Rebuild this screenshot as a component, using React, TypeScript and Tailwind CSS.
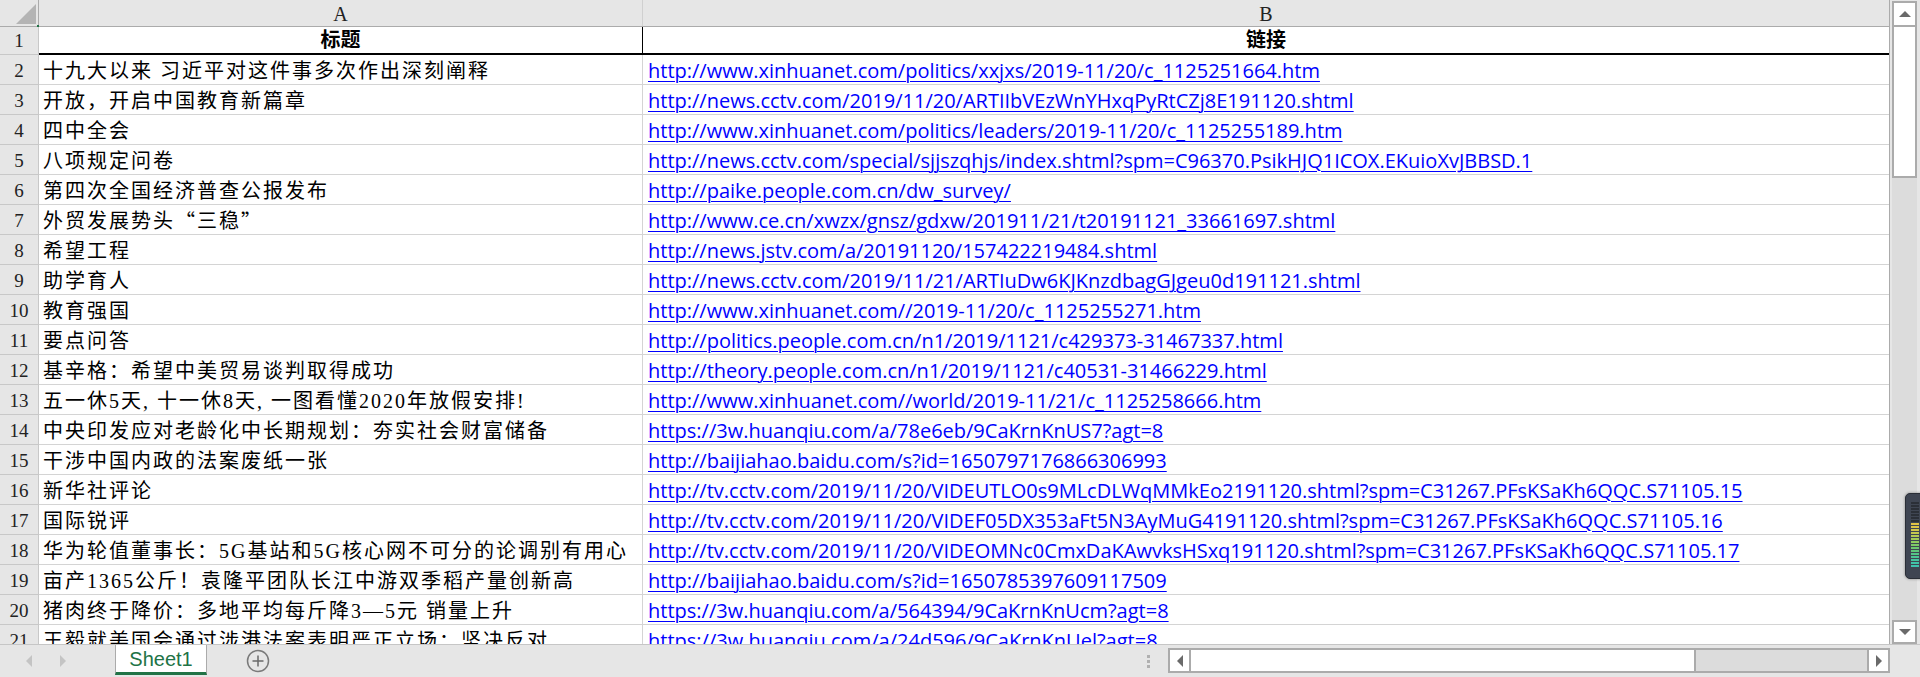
import React from "react";

const rows: [string, string][] = [
  ["十九大以来 习近平对这件事多次作出深刻阐释", "http://www.xinhuanet.com/politics/xxjxs/2019-11/20/c_1125251664.htm"],
  ["开放，开启中国教育新篇章", "http://news.cctv.com/2019/11/20/ARTIIbVEzWnYHxqPyRtCZj8E191120.shtml"],
  ["四中全会", "http://www.xinhuanet.com/politics/leaders/2019-11/20/c_1125255189.htm"],
  ["八项规定问卷", "http://news.cctv.com/special/sjjszqhjs/index.shtml?spm=C96370.PsikHJQ1ICOX.EKuioXvJBBSD.1"],
  ["第四次全国经济普查公报发布", "http://paike.people.com.cn/dw_survey/"],
  ["外贸发展势头“三稳”", "http://www.ce.cn/xwzx/gnsz/gdxw/201911/21/t20191121_33661697.shtml"],
  ["希望工程", "http://news.jstv.com/a/20191120/157422219484.shtml"],
  ["助学育人", "http://news.cctv.com/2019/11/21/ARTIuDw6KJKnzdbagGJgeu0d191121.shtml"],
  ["教育强国", "http://www.xinhuanet.com//2019-11/20/c_1125255271.htm"],
  ["要点问答", "http://politics.people.com.cn/n1/2019/1121/c429373-31467337.html"],
  ["基辛格：希望中美贸易谈判取得成功", "http://theory.people.com.cn/n1/2019/1121/c40531-31466229.html"],
  ["五一休5天, 十一休8天, 一图看懂2020年放假安排!", "http://www.xinhuanet.com//world/2019-11/21/c_1125258666.htm"],
  ["中央印发应对老龄化中长期规划：夯实社会财富储备", "https://3w.huanqiu.com/a/78e6eb/9CaKrnKnUS7?agt=8"],
  ["干涉中国内政的法案废纸一张", "http://baijiahao.baidu.com/s?id=1650797176866306993"],
  ["新华社评论", "http://tv.cctv.com/2019/11/20/VIDEUTLO0s9MLcDLWqMMkEo2191120.shtml?spm=C31267.PFsKSaKh6QQC.S71105.15"],
  ["国际锐评", "http://tv.cctv.com/2019/11/20/VIDEF05DX353aFt5N3AyMuG4191120.shtml?spm=C31267.PFsKSaKh6QQC.S71105.16"],
  ["华为轮值董事长：5G基站和5G核心网不可分的论调别有用心", "http://tv.cctv.com/2019/11/20/VIDEOMNc0CmxDaKAwvksHSxq191120.shtml?spm=C31267.PFsKSaKh6QQC.S71105.17"],
  ["亩产1365公斤！袁隆平团队长江中游双季稻产量创新高", "http://baijiahao.baidu.com/s?id=1650785397609117509"],
  ["猪肉终于降价：多地平均每斤降3—5元 销量上升", "https://3w.huanqiu.com/a/564394/9CaKrnKnUcm?agt=8"],
  ["王毅就美国会通过涉港法案表明严正立场：坚决反对", "https://3w.huanqiu.com/a/24d596/9CaKrnKnUel?agt=8"],
];

const meterColors = [
  "bg-[#2b2f37]", "bg-[#2b2f37]", "bg-[#2b2f37]", "bg-[#2b2f37]", "bg-[#2b2f37]", "bg-[#2b2f37]", "bg-[#2b2f37]",
  "bg-[#e1c244]", "bg-[#dcc447]", "bg-[#d2c64b]", "bg-[#c4c84f]", "bg-[#b3c953]", "bg-[#a2ca58]",
  "bg-[#8fca5e]", "bg-[#7dc966]", "bg-[#6cc76f]", "bg-[#5fc67a]", "bg-[#54c586]", "bg-[#4bc492]",
  "bg-[#45c39d]", "bg-[#41c2a7]", "bg-[#3fc1ae]",
];

function renderTitle(t: string) {
  const parts = t.split(/([“”])/);
  return parts.map((p, i) =>
    p === "“" || p === "”" ? (
      <span key={i} className="inline-block w-[22px] font-['Noto_Sans_CJK_SC',sans-serif] text-center">
        {p}
      </span>
    ) : (
      <React.Fragment key={i}>{p}</React.Fragment>
    )
  );
}

function Tri({ dir }: { dir: "up" | "down" | "left" | "right" }) {
  const pts = {
    up: "0,6 6,0 12,6",
    down: "0,0 12,0 6,6",
    left: "6,0 6,12 0,6",
    right: "0,0 0,12 6,6",
  }[dir];
  const vertical = dir === "up" || dir === "down";
  return (
    <svg width={vertical ? 12 : 6} height={vertical ? 6 : 12} viewBox={vertical ? "0 0 12 6" : "0 0 6 12"}>
      <polygon points={pts} fill="currentColor" />
    </svg>
  );
}

export default function App() {
  const cjk = "font-['Liberation_Serif','Noto_Sans_CJK_SC',serif]";
  return (
    <div className="relative w-[1920px] h-[677px] overflow-hidden bg-[#e6e6e6] flex flex-col">
      <div className="flex h-[644px]">
        {/* grid */}
        <div className="w-[1890px] h-[644px] overflow-hidden bg-white border-r border-[#ababab] flex flex-col">
          {/* column header */}
          <div className="flex h-[27px] shrink-0 bg-[#e6e6e6] border-b border-[#ababab]">
            <div className="relative w-[39px] shrink-0 border-r border-[#ababab]">
              <svg width="20" height="20" viewBox="0 0 20 20" className="absolute left-[16px] top-[4px]">
                <polygon points="20,0 20,20 0,20" fill="#b4b4b4" />
              </svg>
              <div className="absolute right-[-1px] bottom-[-1px] w-[2px] h-[2px] bg-[#217346]" />
            </div>
            <div className="w-[604px] shrink-0 border-r border-[#d0d0d0] flex items-center justify-center text-[20px] text-[#222] font-['Liberation_Serif',serif] leading-none pt-[1px]">
              A
            </div>
            <div className="flex-1 flex items-center justify-center text-[20px] text-[#222] font-['Liberation_Serif',serif] leading-none pt-[1px]">
              B
            </div>
          </div>
          {/* row 1 */}
          <div className="flex h-[28px] shrink-0">
            <div className="w-[39px] shrink-0 bg-[#e6e6e6] border-r border-[#ababab] border-b border-[#c8c8c8] flex items-center justify-center text-[19px] text-[#222] font-['Liberation_Serif',serif] leading-none">
              1
            </div>
            <div className={`w-[604px] shrink-0 border-r border-b-2 border-black flex items-center justify-center text-[20px] font-bold text-black ${cjk} leading-none`}>
              标题
            </div>
            <div className={`flex-1 border-b-2 border-black flex items-center justify-center text-[20px] font-bold text-black ${cjk} leading-none`}>
              链接
            </div>
          </div>
          {rows.map(([t, u], i) => (
            <div key={i} className="flex h-[30px] shrink-0">
              <div className="w-[39px] shrink-0 bg-[#e6e6e6] border-r border-[#ababab] border-b border-[#c8c8c8] flex items-center justify-center text-[19px] text-[#222] font-['Liberation_Serif',serif] leading-none pt-[2px]">
                {i + 2}
              </div>
              <div className={`w-[604px] shrink-0 border-r border-b border-[#d4d4d4] flex items-center pl-[4px] text-[20px] tracking-[2px] text-black ${cjk} leading-none whitespace-nowrap overflow-hidden pt-[3px]`}>
                {renderTitle(t)}
              </div>
              <div className="flex-1 border-b border-[#d4d4d4] flex items-center pl-[5px] text-[20px] text-[#0000ff] underline underline-offset-[3px] decoration-1 font-['Open_Sans',sans-serif] leading-none whitespace-nowrap overflow-hidden pt-[2px]">
                {u}
              </div>
            </div>
          ))}
        </div>
        {/* vertical scrollbar */}
        <div className="flex-1 flex pl-[2px] pt-[1px]">
          <div className="w-[25px] flex flex-col">
            <div className="h-[26px] bg-white border-2 border-[#ababab] flex items-center justify-center text-[#6a6a6a]">
              <Tri dir="up" />
            </div>
            <div className="h-[151px] bg-white border-2 border-t-0 border-[#ababab]" />
            <div className="flex-1 bg-[#dcdcdc]" />
            <div className="h-[24px] bg-white border-2 border-[#ababab] flex items-center justify-center text-[#6a6a6a]">
              <Tri dir="down" />
            </div>
          </div>
        </div>
      </div>
      {/* sheet tab bar */}
      <div className="flex-1 flex items-start border-t border-[#c6c6c6] bg-[#e6e6e6]">
        <div className="w-[115px] h-[32px] flex items-center shrink-0 text-[#c4c4c4]">
          <div className="w-[26px]" />
          <Tri dir="left" />
          <div className="w-[28px]" />
          <Tri dir="right" />
        </div>
        <div className="w-[92px] h-[30px] shrink-0 bg-white border-x border-[#ababab] border-b-[3px] border-b-[#217346] flex items-center justify-center text-[20px] text-[#217346] font-['Liberation_Sans',sans-serif] leading-none">
          Sheet1
        </div>
        <div className="w-[39px] shrink-0" />
        <div className="h-[32px] flex items-center">
          <svg width="24" height="24" viewBox="0 0 24 24">
            <circle cx="12" cy="12" r="10.5" fill="none" stroke="#7a7a7a" strokeWidth="1.5" />
            <path d="M12 6.5v11M6.5 12h11" stroke="#6a6a6a" strokeWidth="1.5" />
          </svg>
        </div>
        <div className="flex-1" />
        <div className="h-[32px] flex items-center pr-[18px]">
          <div className="flex flex-col gap-[2px]">
            <div className="w-[3px] h-[3px] bg-[#b0b0b0]" />
            <div className="w-[3px] h-[3px] bg-[#b0b0b0]" />
            <div className="w-[3px] h-[3px] bg-[#b0b0b0]" />
          </div>
        </div>
        <div className="mt-[3px] w-[722px] h-[25px] flex border-2 border-[#ababab] bg-[#dcdcdc] mr-[30px]">
          <div className="w-[21px] bg-white border-r-2 border-[#ababab] flex items-center justify-center text-[#6a6a6a]">
            <Tri dir="left" />
          </div>
          <div className="w-[505px] bg-white border-r-2 border-[#ababab]" />
          <div className="flex-1" />
          <div className="w-[21px] bg-white border-l-2 border-[#ababab] flex items-center justify-center text-[#6a6a6a]">
            <Tri dir="right" />
          </div>
        </div>
      </div>
      {/* floating meter widget */}
      <div className="absolute left-[1905px] top-[493px] w-[24px] h-[86px] rounded-[5px] bg-[#3f4552] border border-[#2a2e36] shadow-[0_0_3px_rgba(0,0,0,0.4)] pl-[5px] pt-[8px]">
        <div className="flex flex-col gap-[1px] w-[8px]">
          {meterColors.map((c, i) => (
            <div key={i} className={`h-[2px] ${c}`} />
          ))}
        </div>
      </div>
    </div>
  );
}
